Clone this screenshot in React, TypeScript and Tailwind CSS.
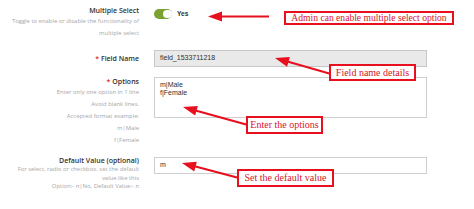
import React from 'react'

const RED = '#e8101f'

type Pt = [number, number]

function Arrow({ from, to }: { from: Pt; to: Pt }) {
  const dx = to[0] - from[0]
  const dy = to[1] - from[1]
  const len = Math.hypot(dx, dy)
  const ux = dx / len
  const uy = dy / len
  const head = 14
  const half = 5
  const bx = to[0] - ux * head
  const by = to[1] - uy * head
  const pts = [
    `${to[0]},${to[1]}`,
    `${bx - uy * half},${by + ux * half}`,
    `${bx + uy * half},${by - ux * half}`,
  ].join(' ')
  return (
    <g>
      <line x1={from[0]} y1={from[1]} x2={bx + ux * 2} y2={by + uy * 2} stroke={RED} strokeWidth={2.2} />
      <polygon points={pts} fill={RED} />
    </g>
  )
}

function Note({ text, className }: { text: string; className: string }) {
  return (
    <div
      className={`absolute flex items-center justify-center border-2 border-[#e8101f] bg-white text-[#d8142a] leading-none whitespace-nowrap ${className}`}
      style={{ fontFamily: '"Liberation Serif", "Times New Roman", serif' }}
    >
      {text}
    </div>
  )
}

const labelFont = { fontFamily: '"Open Sans", "Noto Sans", sans-serif' }
const inputFont = { fontFamily: '"Liberation Sans", Arial, sans-serif' }

export default function App() {
  return (
    <div className="relative w-[474px] h-[209px] bg-white overflow-hidden" style={labelFont}>
      <div className="flex flex-col pt-[6px]">
        {/* Multiple select */}
        <div className="flex">
          <div className="w-[139px] text-right">
            <div className="text-[7px] leading-[10px] font-semibold text-[#303030]">Multiple Select</div>
            <div className="text-[5.9px] leading-[11.5px] text-[#a6a6a6]">Toggle to enable or disable the functionality of</div>
            <div className="text-[5.9px] leading-[11.5px] text-[#a6a6a6]">multiple select</div>
          </div>
          <div className="ml-[15px] flex items-start pt-[3px]">
            <div className="w-[18px] h-[9.5px] rounded-full bg-[#79a22e] flex items-center justify-end pr-[0.5px]">
              <div className="w-[8.5px] h-[8.5px] rounded-full bg-white" />
            </div>
            <span className="ml-[5px] text-[6.6px] leading-[10px] font-bold text-[#303030]" style={inputFont}>
              Yes
            </span>
          </div>
        </div>

        {/* Field name */}
        <div className="flex mt-[11px]">
          <div className="w-[139px] text-right text-[7px] leading-[17px] font-semibold text-[#303030]">
            <span className="text-[#e22626]">*</span> Field Name
          </div>
          <div
            className="ml-[15px] w-[273px] h-[17px] border border-[#c8c8c8] bg-[#e9e9e9] pl-[5px] flex items-center text-[7px] text-[#303030]"
            style={inputFont}
          >
            field_1533711218
          </div>
        </div>

        {/* Options */}
        <div className="flex mt-[10px]">
          <div className="w-[139px] text-right">
            <div className="text-[7px] leading-[9px] font-semibold text-[#303030]">
              <span className="text-[#e22626]">*</span> Options
            </div>
            <div className="text-[5.9px] leading-[12px] text-[#a6a6a6]">
              <div>Enter only one option in 1 line</div>
              <div>Avoid blank lines.</div>
              <div>Accepted format example:</div>
              <div>m|Male</div>
              <div>f|Female</div>
            </div>
          </div>
          <div
            className="ml-[15px] w-[273px] h-[41px] border border-[#cfcfcf] bg-white pl-[5px] pt-[3px] text-[7px] leading-[8px] text-[#303030]"
            style={inputFont}
          >
            <div>m|Male</div>
            <div>f|Female</div>
          </div>
        </div>

        {/* Default value */}
        <div className="flex mt-[11px]">
          <div className="w-[139px] text-right">
            <div className="text-[7px] leading-[8px] font-semibold text-[#303030]">Default Value (optional)</div>
            <div className="text-[5.9px] leading-[8.5px] text-[#a6a6a6]">
              <div>For select, radio or checkbox, set the default</div>
              <div>value like this</div>
              <div>Option:- n|No, Default Value:- n</div>
            </div>
          </div>
          <div
            className="ml-[15px] w-[273px] h-[17px] border border-[#cfcfcf] bg-white pl-[5px] flex items-center text-[7px] text-[#303030]"
            style={inputFont}
          >
            m
          </div>
        </div>
      </div>

      {/* annotations */}
      <svg className="absolute inset-0" width={474} height={209} viewBox="0 0 474 209">
        <Arrow from={[269, 16.5]} to={[208, 16.5]} />
        <Arrow from={[331, 74]} to={[275, 58]} />
        <Arrow from={[248, 125]} to={[183, 107]} />
        <Arrow from={[239, 178]} to={[182, 163]} />
      </svg>
      <Note text="Admin can enable multiple select option" className="left-[284px] top-[11px] w-[170px] h-[14px] text-[9.6px]" />
      <Note text="Field name details" className="left-[329px] top-[64px] w-[87px] h-[17px] text-[10px]" />
      <Note text="Enter the options" className="left-[246px] top-[116px] w-[77px] h-[18px] text-[10px]" />
      <Note text="Set the default value" className="left-[237px] top-[169px] w-[97px] h-[18px] text-[10px]" />
    </div>
  )
}
